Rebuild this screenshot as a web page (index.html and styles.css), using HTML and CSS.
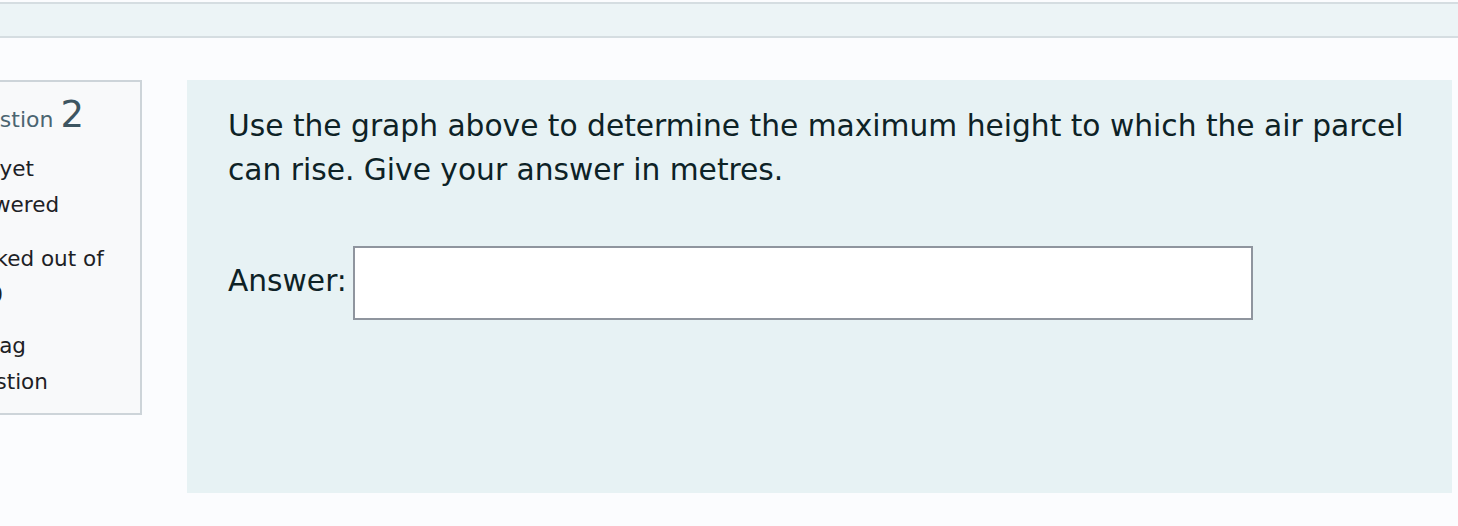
FILE: index.html
```html
<!DOCTYPE html>
<html lang="en">
<head>
<meta charset="utf-8">
<title>Question 2</title>
<link rel="stylesheet" href="styles.css">
</head>
<body>
<div class="topbar"></div>
<div class="que">
  <div class="info">
    <h3 class="no">Question <span class="qno">2</span></h3>
    <div class="state">Not yet answered</div>
    <div class="grade">Marked out of 1.00</div>
    <div class="flag"><svg class="flagicon" width="16" height="16" viewBox="0 0 16 16"><path d="M3 1v14M3 2h9l-2 3 2 3H3" fill="none" stroke="#1d2125" stroke-width="1.5"/></svg> Flag question</div>
  </div>
  <div class="content">
    <div class="formulation">
      <div class="qtext">Use the graph above to determine the maximum height to which the air parcel can rise. Give your answer in metres.</div>
      <div class="ablock">
        <label class="alabel" for="ans">Answer:</label>
        <input class="answer" id="ans" type="text">
      </div>
    </div>
  </div>
</div>
</body>
</html>
```
FILE: styles.css
```css
html, body {
  margin: 0;
  padding: 0;
  background: #fbfcfe;
  overflow: hidden;
}
body {
  font-family: "DejaVu Sans", "Liberation Sans", sans-serif;
  color: #1d2125;
}
.topbar {
  margin-top: 2px;
  height: 32px;
  background: #ecf4f6;
  border-top: 2px solid #d5dde1;
  border-bottom: 2px solid #d5dde1;
}
.que {
  display: flex;
  align-items: flex-start;
  padding-top: 42px;
}
.info {
  box-sizing: border-box;
  width: 203px;
  margin-left: -61px;
  flex: none;
  background: #f8f9fa;
  border: 2px solid #cdd4d9;
  padding: 14px 20px 13px 14px;
  font-size: 21.5px;
  line-height: 36px;
  color: #1d2125;
}
.no {
  margin: 0;
  font-size: 22px;
  font-weight: normal;
  line-height: 40px;
  color: #4b6571;
}
.qno {
  font-size: 37px;
  line-height: 1;
  color: #3d5561;
}
.state {
  margin-top: 11px;
}
.grade {
  margin-top: 18px;
}
.flag {
  margin-top: 15px;
}
.flagicon {
  vertical-align: -2px;
  margin-right: 3px;
}
.content {
  flex: 1;
  margin-left: 45px;
  margin-right: 6px;
}
.formulation {
  box-sizing: border-box;
  height: 413px;
  background: #e7f2f4;
  padding: 24px 20px 0 41px;
  color: #0d2226;
  font-size: 29.7px;
  line-height: 44px;
}
.ablock {
  display: flex;
  align-items: center;
  margin-top: 54px;
}
.alabel {
  margin-right: 6px;
  padding-bottom: 4px;
}
.answer {
  box-sizing: border-box;
  width: 900px;
  height: 74px;
  border: 2px solid #8f959e;
  background: #ffffff;
  margin: 0;
  padding: 0 12px;
  font: inherit;
}
```
